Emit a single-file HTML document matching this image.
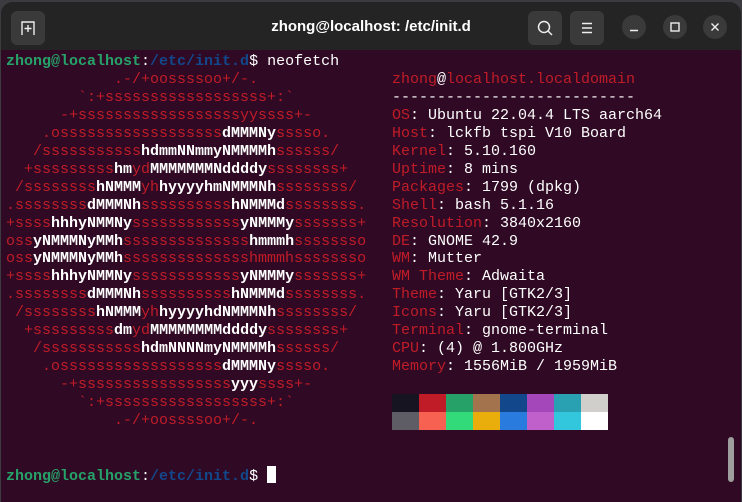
<!DOCTYPE html>
<html><head><meta charset="utf-8"><style>
html,body{margin:0;padding:0;width:742px;height:491px;overflow:hidden;background:#3b3b40;}
.win{position:absolute;left:1px;top:2px;width:740px;height:500px;border-radius:12px 12px 0 0;overflow:hidden;background:#300a24;}
.tb{position:absolute;left:0;top:0;width:740px;height:48px;background:#242424;}
.title{position:absolute;left:0;width:740px;top:16px;text-align:center;color:#fff;font:bold 15px "Liberation Sans",sans-serif;}
.btn{position:absolute;top:9px;width:34px;height:34px;border-radius:6px;background:#3a3a3a;}
.circ{position:absolute;top:13px;width:24px;height:24px;border-radius:50%;background:#3a3a3a;}
pre{position:absolute;left:5px;top:51px;margin:0;font:15px/17.95px "Liberation Mono",monospace;color:#fff;white-space:pre;}
pre.rc{left:391px;top:68.95px}
.r{color:#c01c28}.g{color:#26a269;font-weight:bold}.b{color:#12488b;font-weight:bold}.w{color:#fff;font-weight:bold}
.pal{position:absolute;left:391px;top:392px;}
.pal div{float:left;width:27px;height:18px}
.sb{position:absolute;left:727px;top:435px;width:6px;height:45px;border-radius:3px;background:#9e9e9e}
.cur{display:inline-block;width:9px;height:17px;background:#fff;vertical-align:-3px}
</style></head><body>
<div class="win">
<div class="tb">
<div class="btn" style="left:10px"><svg width="34" height="34" viewBox="0 0 34 34"><path d="M11 24V11h12v13M17 14v7M13.5 17.5h7" stroke="#eee" stroke-width="1.4" fill="none"/></svg></div>
<div class="title">zhong@localhost: /etc/init.d</div>
<div class="btn" style="left:527px"><svg width="34" height="34" viewBox="0 0 34 34"><circle cx="16" cy="16" r="5.5" stroke="#eee" stroke-width="1.5" fill="none"/><path d="M20 20l4 4" stroke="#eee" stroke-width="1.5"/></svg></div>
<div class="btn" style="left:569px"><svg width="34" height="34" viewBox="0 0 34 34"><path d="M12 12.5h10M12 17h10M12 21.5h10" stroke="#eee" stroke-width="1.4"/></svg></div>
<div class="circ" style="left:621px"><svg width="24" height="24"><path d="M8 15.5h8" stroke="#eee" stroke-width="1.4"/></svg></div>
<div class="circ" style="left:662px"><svg width="24" height="24"><rect x="8" y="8" width="8" height="8" stroke="#eee" stroke-width="1.4" fill="none"/></svg></div>
<div class="circ" style="left:702px"><svg width="24" height="24"><path d="M8.5 8.5l7 7M15.5 8.5l-7 7" stroke="#eee" stroke-width="1.4"/></svg></div>
</div>
<pre><span class="g">zhong@localhost</span>:<span class="b">/etc/init.d</span>$ neofetch
<span class="r">            .-/+oossssoo+/-.</span>
<span class="r">        `:+ssssssssssssssssss+:`</span>
<span class="r">      -+ssssssssssssssssssyyssss+-</span>
<span class="r">    .ossssssssssssssssss</span><span class="w">dMMMNy</span><span class="r">sssso.</span>
<span class="r">   /sssssssssss</span><span class="w">hdmmNNmmyNMMMMh</span><span class="r">ssssss/</span>
<span class="r">  +sssssssss</span><span class="w">hm</span><span class="r">yd</span><span class="w">MMMMMMMNddddy</span><span class="r">ssssssss+</span>
<span class="r"> /ssssssss</span><span class="w">hNMMM</span><span class="r">yh</span><span class="w">hyyyyhmNMMMNh</span><span class="r">ssssssss/</span>
<span class="r">.ssssssss</span><span class="w">dMMMNh</span><span class="r">ssssssssss</span><span class="w">hNMMMd</span><span class="r">ssssssss.</span>
<span class="r">+ssss</span><span class="w">hhhyNMMNy</span><span class="r">ssssssssssss</span><span class="w">yNMMMy</span><span class="r">sssssss+</span>
<span class="r">oss</span><span class="w">yNMMMNyMMh</span><span class="r">ssssssssssssss</span><span class="w">hmmmh</span><span class="r">ssssssso</span>
<span class="r">oss</span><span class="w">yNMMMNyMMh</span><span class="r">sssssssssssssshmmmhssssssso</span>
<span class="r">+ssss</span><span class="w">hhhyNMMNy</span><span class="r">ssssssssssss</span><span class="w">yNMMMy</span><span class="r">sssssss+</span>
<span class="r">.ssssssss</span><span class="w">dMMMNh</span><span class="r">ssssssssss</span><span class="w">hNMMMd</span><span class="r">ssssssss.</span>
<span class="r"> /ssssssss</span><span class="w">hNMMM</span><span class="r">yh</span><span class="w">hyyyyhdNMMMNh</span><span class="r">ssssssss/</span>
<span class="r">  +sssssssss</span><span class="w">dm</span><span class="r">yd</span><span class="w">MMMMMMMMddddy</span><span class="r">ssssssss+</span>
<span class="r">   /sssssssssss</span><span class="w">hdmNNNNmyNMMMMh</span><span class="r">ssssss/</span>
<span class="r">    .ossssssssssssssssss</span><span class="w">dMMMNy</span><span class="r">sssso.</span>
<span class="r">      -+sssssssssssssssss</span><span class="w">yyy</span><span class="r">ssss+-</span>
<span class="r">        `:+ssssssssssssssssss+:`</span>
<span class="r">            .-/+oossssoo+/-.</span>


<span class="g">zhong@localhost</span>:<span class="b">/etc/init.d</span>$ <span class="cur"></span></pre>
<pre class="rc"><span class="r">zhong</span>@<span class="r">localhost.localdomain</span>
---------------------------
<span class="r">OS</span>: Ubuntu 22.04.4 LTS aarch64
<span class="r">Host</span>: lckfb tspi V10 Board
<span class="r">Kernel</span>: 5.10.160
<span class="r">Uptime</span>: 8 mins
<span class="r">Packages</span>: 1799 (dpkg)
<span class="r">Shell</span>: bash 5.1.16
<span class="r">Resolution</span>: 3840x2160
<span class="r">DE</span>: GNOME 42.9
<span class="r">WM</span>: Mutter
<span class="r">WM Theme</span>: Adwaita
<span class="r">Theme</span>: Yaru [GTK2/3]
<span class="r">Icons</span>: Yaru [GTK2/3]
<span class="r">Terminal</span>: gnome-terminal
<span class="r">CPU</span>: (4) @ 1.800GHz
<span class="r">Memory</span>: 1556MiB / 1959MiB</pre>
<div class="pal">
<div style="background:#171421"></div><div style="background:#c01c28"></div><div style="background:#26a269"></div><div style="background:#a2734c"></div><div style="background:#12488b"></div><div style="background:#a347ba"></div><div style="background:#2aa1b3"></div><div style="background:#d0cfcc"></div>
<div style="clear:left;background:#5e5c64"></div><div style="background:#f66151"></div><div style="background:#33da7a"></div><div style="background:#e9ad0c"></div><div style="background:#2a7bde"></div><div style="background:#c061cb"></div><div style="background:#33c7de"></div><div style="background:#ffffff"></div>
</div>
<div class="sb"></div>
</div>
</body></html>
